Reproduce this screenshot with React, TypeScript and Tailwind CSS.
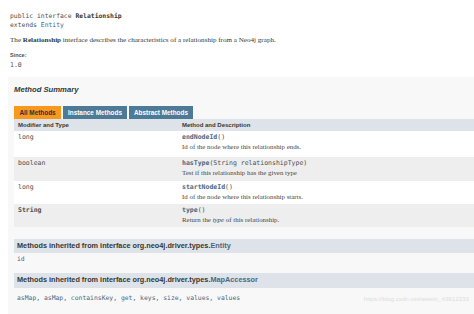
import React from "react";

const mono = "font-['DejaVu_Sans_Mono',monospace]";
const serif = "font-['Liberation_Serif',serif]";
const sans = "font-['Liberation_Sans',Arial,sans-serif]";

const ROWS = [
  { type: "long", name: "endNodeId", args: "()", desc: <>Id of the node where this relationship ends.</>, h: "h-[26px]", alt: false },
  {
    type: "boolean",
    name: "hasType",
    args: "(String relationshipType)",
    desc: <>Test if this relationship has the given type</>,
    h: "h-[24px]",
    alt: true,
  },
  { type: "long", name: "startNodeId", args: "()", desc: <>Id of the node where this relationship starts.</>, h: "h-[23px]", alt: false },
  {
    type: "String",
    name: "type",
    args: "()",
    desc: (
      <>
        Return the <i>type</i> of this relationship.
      </>
    ),
    h: "h-[23px]",
    alt: true,
    bold: true,
  },
];

export default function App() {
  return (
    <div className="w-[474px] h-[314px] overflow-hidden bg-white text-[#353833] relative">
      {/* class signature */}
      <div className="pl-[10px] pt-[12px]">
        <div className={`${mono} text-[6.4px] leading-[9px] text-[#4d4d4d]`}>
          public interface <b className="text-[#353833]">Relationship</b>
        </div>
        <div className={`${mono} text-[6.4px] leading-[9px] text-[#4d4d4d]`}>
          extends <span className="text-[#4a6782]">Entity</span>
        </div>
        <p className={`${serif} text-[7.1px] leading-[9px] mt-[6px]`}>
          The <b>Relationship</b> interface describes the characteristics of a relationship from a Neo4j graph.
        </p>
        <div className={`${sans} text-[5.5px] font-bold leading-[8px] mt-[6px] text-[#4d4d4d]`}>Since:</div>
        <div className={`${mono} text-[6.5px] leading-[9px] mt-[2px] text-[#4d4d4d]`}>1.0</div>
      </div>

      {/* summary block */}
      <div className="ml-[8px] mt-[7px] bg-[#f8f8f8] pl-[6px] pt-[8px] pb-[20px]">
        <div className={`${sans} italic font-bold text-[7.7px] leading-[10px] text-[#353833]`}>Method Summary</div>

        <div className={`flex gap-[2px] mt-[11px] ${sans} text-[6.4px] font-bold leading-[13px] text-white`}>
          <div className="bg-[#f8981d] w-[47px] text-center text-[#253441]">All Methods</div>
          <div className="bg-[#4d7a97] w-[64px] text-center">Instance Methods</div>
          <div className="bg-[#4d7a97] w-[64px] text-center">Abstract Methods</div>
        </div>

        <div className={`grid grid-cols-[168px_1fr] bg-[#dee3e9] h-[12px] items-center ${sans} text-[6px] font-bold text-[#353833]`}>
          <div className="pl-[4px]">Modifier and Type</div>
          <div>Method and Description</div>
        </div>
        {ROWS.map((r) => (
          <div key={r.name} className={`grid grid-cols-[168px_1fr] ${r.h} pt-[2px] ${r.alt ? "bg-[#eeeeef]" : "bg-white"}`}>
            <div className={`pl-[4px] ${mono} text-[6.5px] leading-[9px] text-[#4d4d4d] ${r.bold ? "font-bold" : ""}`}>
              {r.type}
            </div>
            <div>
              <div className={`${mono} text-[6.5px] leading-[9px] text-[#4d4d4d]`}>
                <b className="text-[#4a6782]">{r.name}</b>
                {r.args}
              </div>
              <div className={`${serif} text-[6.9px] leading-[9px] text-[#474747]`}>{r.desc}</div>
            </div>
          </div>
        ))}

        <div className={`mt-[12px] bg-[#dee3e9] h-[14px] flex items-center pl-[3px] ${sans} text-[7.3px] font-bold text-[#353833]`}>
          Methods inherited from interface org.neo4j.driver.types.<span className="text-[#4a6782]">Entity</span>
        </div>
        <div className={`pl-[3px] h-[20px] pt-[2px] ${mono} text-[6.4px] leading-[9px] text-[#4a6782]`}>id</div>

        <div className={`bg-[#dee3e9] h-[15px] flex items-center pl-[3px] ${sans} text-[7.3px] font-bold text-[#353833]`}>
          Methods inherited from interface org.neo4j.driver.types.<span className="text-[#4a6782]">MapAccessor</span>
        </div>
        <div className={`pl-[3px] pt-[6px] ${mono} text-[6.4px] leading-[9px] text-[#4a6782]`}>
          asMap, asMap, containsKey, get, keys, size, values, values
        </div>
      </div>

      {/* watermark */}
      <div className={`absolute right-[5px] bottom-[11px] ${sans} text-[6.2px] text-[#dcdcdc]`}>
        https://blog.csdn.net/weixin_43912233
      </div>
    </div>
  );
}
